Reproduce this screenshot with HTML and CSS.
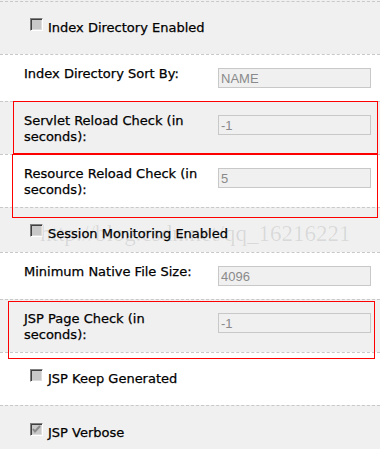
FILE: index.html
```html
<!DOCTYPE html>
<html lang="en">
<head>
  <meta charset="UTF-8">
  <title>Web Container Settings</title>
  <link rel="stylesheet" href="styles.css">
</head>
<body>

  <div class="settings">
    <div class="row gray check">
      <span class="box"></span>
      <span class="text">Index Directory Enabled</span>
    </div>

    <div class="row field">
      <label>Index Directory Sort By:</label>
      <input value="NAME" disabled>
    </div>

    <div class="row gray field">
      <label>Servlet Reload Check (in seconds):</label>
      <input value="-1" disabled>
    </div>

    <div class="row field">
      <label>Resource Reload Check (in seconds):</label>
      <input value="5" disabled>
    </div>

    <div class="row gray check short">
      <span class="box"></span>
      <span class="text">Session Monitoring Enabled</span>
    </div>

    <div class="row field">
      <label>Minimum Native File Size:</label>
      <input value="4096" disabled>
    </div>

    <div class="row gray field">
      <label>JSP Page Check (in seconds):</label>
      <input value="-1" disabled>
    </div>

    <div class="row check">
      <span class="box"></span>
      <span class="text">JSP Keep Generated</span>
    </div>

    <div class="row gray check last">
      <span class="box">
        <svg width="9" height="9" viewBox="0 0 9 9"><path d="M1 4 L3 6.5 L8 1" fill="none" stroke="#8a8a8a" stroke-width="2"/></svg>
      </span>
      <span class="text">JSP Verbose</span>
    </div>
  </div>

  <!-- annotation frames from the original screenshot -->
  <div class="mark mark-servlet"></div>
  <div class="mark mark-resource"></div>
  <div class="mark mark-jsp"></div>

  <div class="watermark">http://blog.csdn.net/qq_16216221</div>

</body>
</html>
```

FILE: styles.css
```css
body { margin: 0; background: #f0f0f0; font-family: "DejaVu Sans", Verdana, sans-serif; font-size: 13px; color: #000; overflow: hidden; }
.settings { padding-top: 1px; }
.row { border-top: 1px dashed #c8c8c8; background: #fff; box-sizing: border-box; }
.row.gray { background: #f0f0f0; }
.row label, .row .text { -webkit-text-stroke: 0.25px #000; }

.field { display: grid; grid-template-columns: 176px 153px; column-gap: 18px; align-items: start; padding: 9px 0 9px 24px; }
.field label { line-height: 16px; margin-top: 2px; }
.field input { width: 153px; height: 20px; margin: 4px 0; box-sizing: border-box; border: 1px solid #c8c8c8; background: #f0f0f0; padding: 0 2px; font-family: "Liberation Sans", Arial, sans-serif; font-size: 13px; color: #8a8a8a; }

.check { display: flex; align-items: flex-start; gap: 5px; height: 53px; padding: 16px 0 0 30px; }
.check.short { height: 45px; }
.check.last { height: 60px; padding-top: 17px; }
.check .text { line-height: 16px; margin-top: 2px; }
.box { width: 13px; height: 13px; box-sizing: border-box; display: flex; align-items: center; justify-content: center; background: #c8c8c8; border-top: 1px solid #808080; border-left: 1px solid #808080; border-right: 1px solid #fff; border-bottom: 1px solid #fff; box-shadow: inset 1px 1px #404040, inset -1px -1px #dcdcdc; }

.mark { position: absolute; border: 1px solid #f00; box-sizing: border-box; }
.mark-servlet { left: 13px; top: 101px; width: 365px; height: 53px; }
.mark-resource { left: 12px; top: 154px; width: 366px; height: 64px; }
.mark-jsp { left: 8px; top: 301px; width: 367px; height: 58px; }

.watermark { position: absolute; left: 40px; top: 221px; font-family: "Liberation Serif", "Times New Roman", serif; font-size: 23px; color: rgba(0, 0, 0, 0.1); white-space: nowrap; }
```
